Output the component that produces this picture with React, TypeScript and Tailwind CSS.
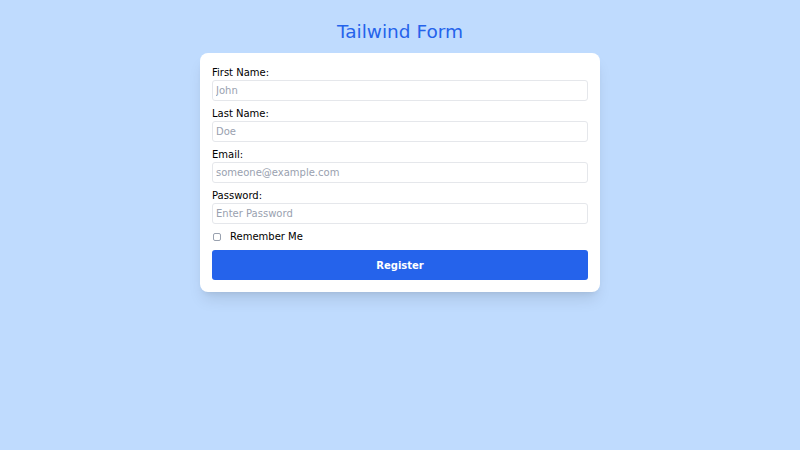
import React from "react";

const fields = [
  { label: "First Name:", type: "text", placeholder: "John" },
  { label: "Last Name:", type: "text", placeholder: "Doe" },
  { label: "Email:", type: "email", placeholder: "someone@example.com" },
  { label: "Password:", type: "password", placeholder: "Enter Password" },
];

function App() {
  return (
    <div className="min-h-screen bg-[#bfdbfe] pt-[18px] font-['DejaVu_Sans',sans-serif]">
      <h1 className="text-center text-[18.5px] leading-[27px] text-[#2563eb] mb-2">
        Tailwind Form
      </h1>
      <form
        className="w-[400px] mx-auto bg-white rounded-lg shadow-lg px-3 pt-3 pb-3 text-[10px] leading-[15px]"
        onSubmit={(e) => e.preventDefault()}
      >
        {fields.map((field) => (
          <div key={field.label} className="mb-[5px]">
            <label className="block text-black">{field.label}</label>
            <input
              type={field.type}
              placeholder={field.placeholder}
              className="block w-full h-[21px] border border-gray-200 rounded-[3px] px-[3px] placeholder:text-gray-400 outline-none"
            />
          </div>
        ))}
        <label className="flex items-center h-[15px]">
          <input
            type="checkbox"
            className="appearance-none w-2 h-2 border border-gray-400 rounded-[2px] bg-white ml-px"
          />
          <span className="ml-[9px] text-black">Remember Me</span>
        </label>
        <button
          type="submit"
          className="mt-[6px] w-full h-[30px] bg-[#2563eb] text-white font-bold rounded-[3px]"
        >
          Register
        </button>
      </form>
    </div>
  );
}

export default App;
